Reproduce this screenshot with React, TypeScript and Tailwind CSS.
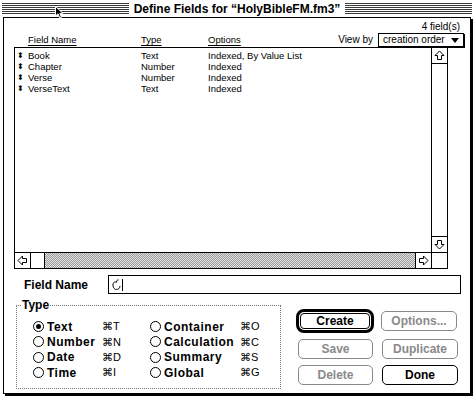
import React from 'react';

type FieldRow = { name: string; type: string; options: string };

const fields: FieldRow[] = [
  { name: 'Book', type: 'Text', options: 'Indexed, By Value List' },
  { name: 'Chapter', type: 'Number', options: 'Indexed' },
  { name: 'Verse', type: 'Number', options: 'Indexed' },
  { name: 'VerseText', type: 'Text', options: 'Indexed' },
];

const typesLeft = [
  { label: 'Text', key: '⌘T', checked: true },
  { label: 'Number', key: '⌘N' },
  { label: 'Date', key: '⌘D' },
  { label: 'Time', key: '⌘I' },
];

const typesRight = [
  { label: 'Container', key: '⌘O' },
  { label: 'Calculation', key: '⌘C' },
  { label: 'Summary', key: '⌘S' },
  { label: 'Global', key: '⌘G' },
];

const Stripes = () => (
  <div className="flex-1 h-[12px] bg-[repeating-linear-gradient(to_bottom,#3a3a3a_0px,#3a3a3a_1px,#fff_1px,#fff_2px)]" />
);

const Radio = ({ checked }: { checked?: boolean }) => (
  <span className="w-[11px] h-[11px] rounded-full border border-black flex items-center justify-center shrink-0">
    {checked && <span className="w-[5px] h-[5px] rounded-full bg-black" />}
  </span>
);

const ArrowBox = ({ dir }: { dir: 'up' | 'down' | 'left' | 'right' }) => {
  const rot = { up: 'rotate-0', down: 'rotate-180', left: '-rotate-90', right: 'rotate-90' }[dir];
  return (
    <div className="w-[15px] h-[15px] flex items-center justify-center bg-white">
      <svg width="11" height="11" viewBox="0 0 11 11" className={rot}>
        <path d="M5.5 1 L10 5.5 L7.5 5.5 L7.5 9.5 L3.5 9.5 L3.5 5.5 L1 5.5 Z" fill="white" stroke="black" strokeWidth="1" />
      </svg>
    </div>
  );
};

const Btn = ({ label, disabled, w }: { label: string; disabled?: boolean; w: string }) => (
  <div
    className={`${w} h-[20px] border rounded-[5px] flex items-center justify-center text-[12px] font-bold ${
      disabled ? 'border-[#888] text-[#8a8a8a]' : 'border-black text-black'
    }`}
  >
    {label}
  </div>
);

export default function App() {
  return (
    <div className="w-[474px] h-[399px] bg-white relative overflow-hidden font-['Liberation_Sans',Arial,sans-serif] text-black select-none">
      {/* Title bar */}
      <div className="h-[17px] flex items-center px-[2px] pt-[1px]">
        <Stripes />
        <div className="px-[5px] text-[12px] font-bold leading-[14px] whitespace-nowrap">
          Define Fields for “HolyBibleFM.fm3”
        </div>
        <Stripes />
      </div>

      {/* Window body */}
      <div className="ml-[3px] w-[468px] h-[377px] border border-black shadow-[2px_2px_0_#000] flex flex-col">
        <div className="h-[12px] mt-[3px] pr-[10px] text-right text-[10px] leading-[12px]">4 field(s)</div>

        {/* Header row */}
        <div className="h-[14px] flex items-center text-[9.5px] leading-[12px] relative">
          <div className="pl-[24px] w-[137px]">
            <span className="underline underline-offset-[2px]">Field Name</span>
          </div>
          <div className="w-[67px]">
            <span className="underline underline-offset-[2px]">Type</span>
          </div>
          <div className="flex-1">
            <span className="underline underline-offset-[2px]">Options</span>
          </div>
          <div className="flex items-center gap-[5px] pr-[6px]">
            <span className="text-[10px]">View by</span>
            <div className="w-[86px] h-[14px] border border-black shadow-[1px_1px_0_#000] flex items-center justify-between px-[4px] text-[10px]">
              <span>creation order</span>
              <svg width="8" height="5" viewBox="0 0 8 5">
                <path d="M0 0 L8 0 L4 5 Z" fill="black" />
              </svg>
            </div>
          </div>
        </div>

        {/* List box */}
        <div className="ml-[10px] w-[434px] h-[222px] border border-black flex flex-col">
          <div className="flex flex-1">
            <div className="flex-1 pt-[2px] text-[9.5px] leading-[11px]">
              {fields.map((f) => (
                <div key={f.name} className="flex h-[11px] items-center">
                  <span className="w-[13px] pl-[2px] text-[8px] leading-[8px]">⬍</span>
                  <span className="w-[113px]">{f.name}</span>
                  <span className="w-[67px]">{f.type}</span>
                  <span>{f.options}</span>
                </div>
              ))}
            </div>
            <div className="w-[16px] border-l border-black flex flex-col justify-between">
              <div className="border-b border-black">
                <ArrowBox dir="up" />
              </div>
              <div className="border-t border-black">
                <ArrowBox dir="down" />
              </div>
            </div>
          </div>
          <div className="h-[16px] border-t border-black flex">
            <div className="border-r border-black">
              <ArrowBox dir="left" />
            </div>
            <div className="w-[14px] border-r border-black bg-white" />
            <div className="flex-1 bg-[repeating-conic-gradient(#999_0_25%,#e4e4e4_0_50%)] bg-[length:2px_2px]" />
            <div className="border-l border-black">
              <ArrowBox dir="right" />
            </div>
            <div className="w-[16px] border-l border-black" />
          </div>
        </div>

        {/* Field name input */}
        <div className="flex items-center mt-[6px] h-[19px]">
          <div className="pl-[20px] w-[104px] text-[12px] font-bold">Field Name</div>
          <div className="w-[353px] h-[19px] border border-black flex items-center pl-[3px]">
            <svg width="9" height="12" viewBox="0 0 9 12">
              <path d="M4.5 3.5 C3 2.5 1 3 1 6 C1 9 3 11 4.5 10.3 C6 11 8 9 8 7" fill="none" stroke="black" strokeWidth="1" />
              <path d="M4.5 3 C4.5 1.5 5.5 0.8 6.5 0.8" fill="none" stroke="black" strokeWidth="1" />
            </svg>
            <span className="w-[1px] h-[12px] bg-black ml-[1px]" />
          </div>
        </div>

        {/* Type group and buttons */}
        <div className="flex mt-[10px]">
          <div className="ml-[12px] w-[265px] h-[84px] mt-[1px] border border-dotted border-[#777] relative">
            <span className="absolute left-[4px] -top-[8px] bg-white px-[1px] text-[12px] font-bold leading-[14px]">Type</span>
            <div className="flex pt-[13px] text-[12px] font-bold">
              <div className="pl-[16px] w-[133px] flex flex-col">
                {typesLeft.map((t) => (
                  <div key={t.label} className="h-[15.3px] flex items-center">
                    <Radio checked={t.checked} />
                    <span className="ml-[3px] w-[55px] tracking-[0.5px]">{t.label}</span>
                    <span className="font-normal text-[11px]">{t.key}</span>
                  </div>
                ))}
              </div>
              <div className="flex flex-col">
                {typesRight.map((t) => (
                  <div key={t.label} className="h-[15.3px] flex items-center">
                    <Radio />
                    <span className="ml-[3px] w-[76px] tracking-[0.5px]">{t.label}</span>
                    <span className="font-normal text-[11px]">{t.key}</span>
                  </div>
                ))}
              </div>
            </div>
          </div>

          <div className="ml-[15px] flex flex-col gap-[6px] mt-[5px]">
            <div className="flex gap-[7px] items-center">
              <div className="border-[3px] border-black rounded-[8px] p-[1px]">
                <div className="w-[70px] h-[16px] border border-black rounded-[4px] flex items-center justify-center text-[12px] font-bold">
                  Create
                </div>
              </div>
              <Btn label="Options..." disabled w="w-[76px]" />
            </div>
            <div className="flex gap-[9px] pl-[2px]">
              <Btn label="Save" disabled w="w-[75px]" />
              <Btn label="Duplicate" disabled w="w-[76px]" />
            </div>
            <div className="flex gap-[9px] pl-[2px]">
              <Btn label="Delete" disabled w="w-[75px]" />
              <Btn label="Done" w="w-[76px]" />
            </div>
          </div>
        </div>
      </div>

      {/* Mouse pointer */}
      <svg className="absolute left-[55px] top-[6px]" width="9" height="13" viewBox="0 0 9 13">
        <path d="M0.5 0.5 L0.5 10 L3 7.8 L4.8 12 L6.5 11.3 L4.8 7.3 L8 7.3 Z" fill="black" stroke="white" strokeWidth="1" />
      </svg>
    </div>
  );
}
